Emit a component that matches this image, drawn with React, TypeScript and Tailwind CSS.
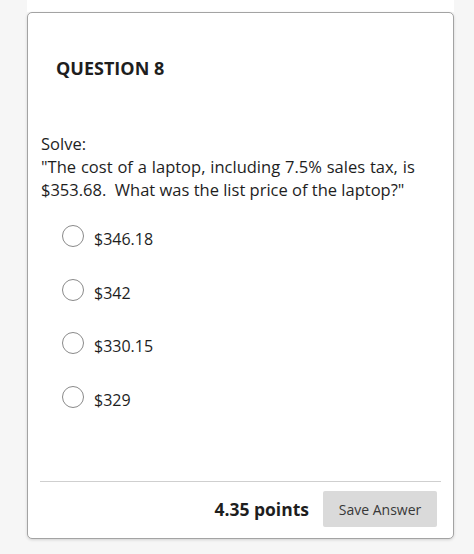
const options = ["$346.18", "$342", "$330.15", "$329"];

export default function App() {
  return (
    <div
      className="w-[474px] h-[554px] bg-[#f6f6f6] flex text-[#1e1e1e]"
      style={{ fontFamily: '"Open Sans", "Noto Sans", sans-serif' }}
    >
      <div className="w-[27px]" />
      <div className="w-[427px] flex flex-col">
        <div className="h-[12px] bg-white" />
        <div className="h-[527px] bg-white border border-[#a3a3a3] rounded-[5px] shadow-[0_1px_3px_rgba(0,0,0,0.15)] flex flex-col">
          <div className="pl-[28px] pt-[43px] text-[18px] font-bold leading-[24px]">
            QUESTION 8
          </div>

          <div className="pl-[13px] pt-[52px] text-[16.5px] leading-[23px]">
            Solve:
            <br />
            <span className="[word-spacing:0.6px]">
              "The cost of a laptop, including 7.5% sales tax, is
            </span>
            <br />
            $353.68.&nbsp; What was the list price of the laptop?"
          </div>

          <div className="flex flex-col gap-[31.7px] pl-[34px] pt-[24px]">
            {options.map((o) => (
              <label key={o} className="flex items-center gap-[10px] h-[22px]">
                <span className="w-[22px] h-[22px] rounded-full border-[1.5px] border-[#8a8a8a] bg-white" />
                <span className="text-[16px] leading-[22px] pt-[6px]">{o}</span>
              </label>
            ))}
          </div>

          <div className="flex-1" />

          <div className="mx-[12px] border-t border-[#cfcfcf]" />
          <div className="flex items-center justify-end gap-[14px] pr-[16px] pt-[9px] pb-[11px]">
            <span className="text-[17.5px] font-bold">4.35 points</span>
            <button className="w-[114px] h-[36px] bg-[#dadada] rounded-[2px] text-[14px] text-[#383838]">
              Save Answer
            </button>
          </div>
        </div>
      </div>
    </div>
  );
}
